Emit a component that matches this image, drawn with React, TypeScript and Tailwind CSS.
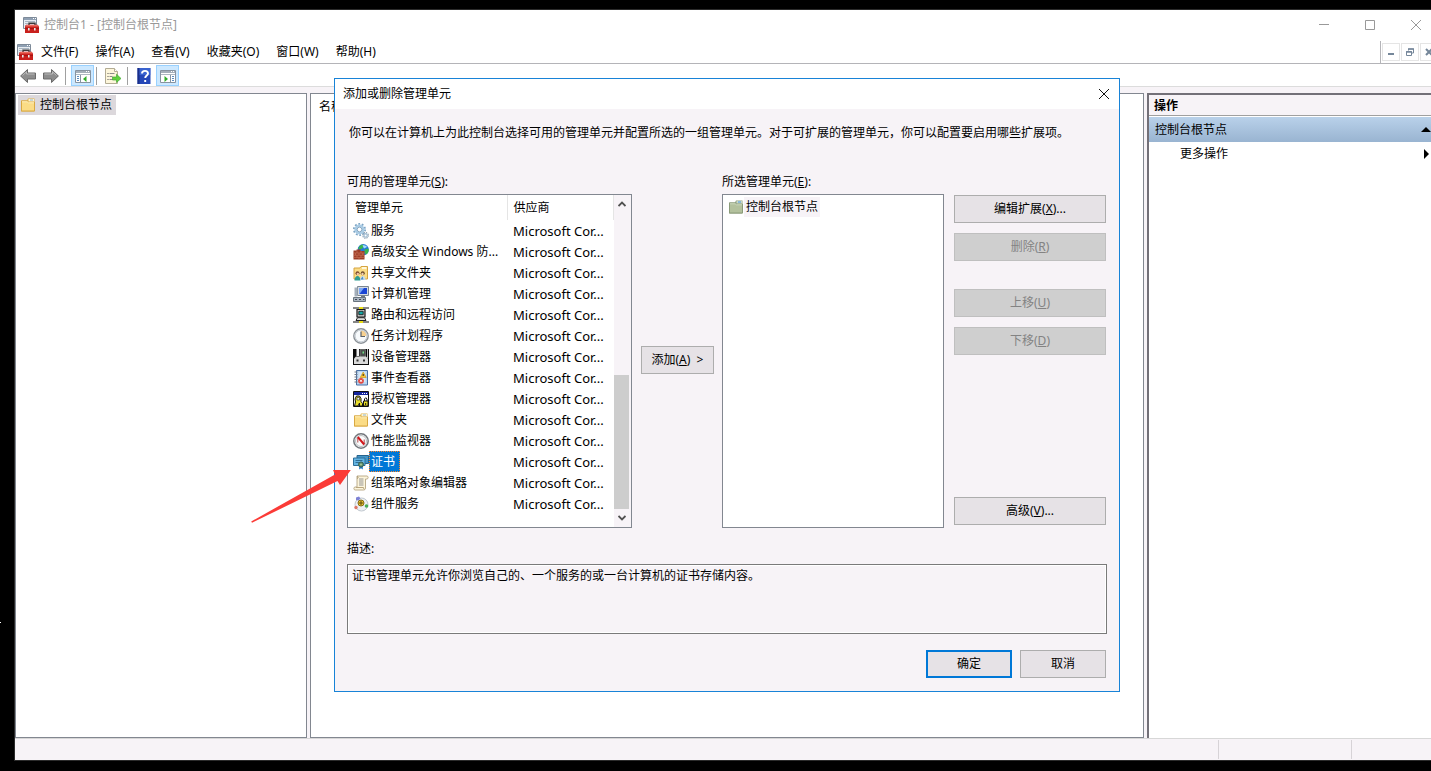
import React from "react";
import type { ReactNode } from "react";

function Svg({ children, className = "size-4" }: { children: ReactNode; className?: string }) {
  return (
    <svg viewBox="0 0 16 16" className={`${className} shrink-0`} aria-hidden="true">
      {children}
    </svg>
  );
}

const ConsoleIcon = () => (
  <Svg>
    <path d="M0.5 0.5h13v11h-13z" fill="#e8edf2" stroke="#7d8a99" />
    <path d="M1 1h12v2H1z" fill="#8fa0b3" />
    <path d="M2 4.5h10M2 6.5h3M2 8.5h3" stroke="#a9b6c3" />
    <path d="M10 1.5h1M12 1.5h1" stroke="#fff" />
    <path d="M6 8V6.2h6V8" fill="none" stroke="#3a3a3a" strokeWidth="1.4" />
    <path d="M3.2 7.8h11.6l1.2 1.8V16H2V9.6z" fill="#c9201c" />
    <path d="M3.4 8h11.2l.8 1.4H2.8z" fill="#ee6a5c" />
    <path d="M2 11.5h14" stroke="#a81512" />
    <path d="M5 11h1.6v2.5H5zM11 11h1.6v2.5H11z" fill="#e9e9e9" />
  </Svg>
);

const FolderIcon = ({ green = false }: { green?: boolean }) => (
  <Svg>
    <path d="M1 3.5h6l1-2h6.5V14.5H1z" fill={green ? "#8fa07f" : "#e2b44e"} />
    <path d="M8.5 2h5.500v3H8.500z" fill={green ? "#c9d8c4" : "#fff4cf"} />
    <path d="M10 2.500h3v1h-3z" fill={green ? "#4a9be8" : "#8fb8d8"} />
    <path d="M1.500 4h5.800l1.200 1h6v9h-13z" fill={green ? "#b3c19d" : "#fbdc86"} stroke={green ? "#8b9b79" : "#d9a942"} />
    <path d="M2 4.800h5.200l1.200 1h5.600" fill="none" stroke={green ? "#ced9bd" : "#fff0bd"} />
  </Svg>
);

const ServicesIcon = () => (
  <Svg>
    <circle cx="6.500" cy="6.500" r="5.600" fill="none" stroke="#7ba3c4" strokeWidth="1.800" strokeDasharray="1.800 1.700" />
    <circle cx="6.500" cy="6.500" r="3.700" fill="#fff" stroke="#a9cbe4" strokeWidth="2.600" />
    <circle cx="6.500" cy="6.500" r="2.300" fill="#fff" stroke="#7396b3" strokeWidth=".8" />
    <circle cx="12.600" cy="12.400" r="2.800" fill="none" stroke="#8497a8" strokeWidth="1.200" strokeDasharray="1.200 1" />
    <circle cx="12.600" cy="12.400" r="1.700" fill="#fff" stroke="#a5bfd4" strokeWidth="1.400" />
  </Svg>
);

const FirewallIcon = () => (
  <Svg>
    <circle cx="10.200" cy="5.700" r="5.600" fill="#2479d8" />
    <path d="M5.500 4c1-2.300 2.500-3.400 4.500-3.500l.5 2.500-2 2H5.500zM11.500 5.500l4-1c.6 2.800-.4 4.800-2.500 6l-1.500-2z" fill="#3bb54c" />
    <path d="M9.500 1.500c2-.8 3.500 0 4.500 1.500l-3 1.500z" fill="#a6e0fb" />
    <path d="M.5 6.500h3V5.500h4v1.500h4v8.500H.5z" fill="#9c3c27" />
    <path d="M.5 9h11M.5 11.200h11M.5 13.400h11M4 6.500V9M8 7v2M2.500 9v2.200M6 9v2.200M9.800 9v2.200M4 11.200v2.200M8 11.200v2.200M6 13.400v2" stroke="#cf7a60" strokeWidth=".6" />
  </Svg>
);

const SharedFolderIcon = () => (
  <Svg>
    <path d="M1 3h6l1-1.500h6.500V14H1z" fill="#fbdc86" stroke="#d6a440" />
    <path d="M9 2h4.500v2H9z" fill="#fff7db" />
    <circle cx="4.500" cy="8.200" r="2" fill="#7b4a2d" />
    <circle cx="4.800" cy="8.900" r="1.200" fill="#f2c9a4" />
    <path d="M1.500 15.500c0-6 6-6 6 0z" fill="#2f9c92" />
    <circle cx="9.700" cy="8.200" r="2" fill="#6d4a2a" />
    <circle cx="9.500" cy="8.900" r="1.200" fill="#f6d4b1" />
    <path d="M7 15c0-5.500 5.500-5.500 5.500 0z" fill="#c7dcec" />
    <path d="M7.500 14.500l2-3 1 3z" fill="#4c8cc4" />
  </Svg>
);

const ComputerIcon = () => (
  <Svg>
    <path d="M4.500.5h11v9h-11z" fill="#d5dbe1" stroke="#7b8691" />
    <path d="M6 2h8v6H6z" fill="#1b45d3" />
    <path d="M6 2h5L6.500 8H6z" fill="#7da8f4" />
    <path d="M1.500 1.500h3v9h-3z" fill="#a4afba" />
    <path d="M8 10h4v1.500H8z" fill="#6f7882" />
    <path d="M.5 11.500h12v4H.5z" fill="#a9b5c0" stroke="#6a757f" />
    <path d="M2 13.500h2M6 13.500h2M10 13.500h1.500" stroke="#445" />
  </Svg>
);

const RoutingIcon = () => (
  <Svg>
    <path d="M0 1h16M0 15h16" stroke="#111" strokeWidth="1.200" />
    <path d="M6 0h4v2H6zM6 14h4v2H6z" fill="#e8dc15" />
    <path d="M4 2.500h8v7.500H4z" fill="#c8c8c8" stroke="#151515" strokeWidth="1.200" />
    <path d="M5.800 4.300h4.400v3.400H5.800z" fill="#11a5a4" stroke="#111" strokeWidth=".8" />
    <path d="M3 13.500l1.500-2.800h7l1.500 2.800z" fill="#ddd" stroke="#222" />
  </Svg>
);

const ClockIcon = () => (
  <Svg>
    <circle cx="8" cy="8" r="7.200" fill="#f7fafc" stroke="#8b9197" strokeWidth="1.400" />
    <path d="M8 8V2.200A5.800 5.800 0 0 1 13.800 8z" fill="#f7d191" />
    <circle cx="8" cy="8" r="5.900" fill="none" stroke="#c4cbd2" />
    <path d="M8 3.500V8.500h4" fill="none" stroke="#59616a" strokeWidth="1.200" />
  </Svg>
);

const DeviceIcon = () => (
  <Svg>
    <path d="M0 0h16v16H0z" fill="#0a0a0a" />
    <path d="M3.500 0h2.500v7h-2.500z" fill="#f2f2f2" />
    <path d="M7 .5h5.500V9H7z" fill="#4c504e" stroke="#8c8c8c" strokeWidth=".6" />
    <path d="M9.500 2.500H11v2H9.500z" fill="#71e085" />
    <path d="M14 0h.8v9H14z" fill="#ececec" />
    <path d="M1 9.500L3 7.500h10l2 2v5.500H1z" fill="#dadada" />
    <path d="M3.500 10.500h2v2h-2zM10 10.500h2v2h-2z" fill="#333" />
  </Svg>
);

const EventIcon = () => (
  <Svg>
    <path d="M3.500.5h11v14.500h-11z" fill="#bad6f2" stroke="#496fa4" />
    <path d="M5.500 3h7M5.500 5h7M5.500 7h7M5.500 9h7M5.500 11h7" stroke="#fff" strokeWidth=".8" />
    <path d="M1.500 2h3M1.500 4.500h3M1.500 7h3M1.500 9.500h3M1.500 12h3" stroke="#717984" />
    <path d="M10.200 2l3 5.500h-6z" fill="#ffc42c" stroke="#c18d12" strokeWidth=".6" />
    <path d="M10.200 4v2" stroke="#222" />
    <circle cx="8" cy="10.800" r="2.900" fill="#e3473f" />
    <path d="M7 9.800l2 2M9 9.800l-2 2" stroke="#fff" />
  </Svg>
);

const AuthorizationIcon = () => (
  <Svg>
    <path d="M.5.5h15v15H.5z" fill="#fff" stroke="#111" />
    <path d="M1 1h14v3H1z" fill="#14259e" />
    <path d="M9 2.500h1M11 2.500h1M13 2.500h1" stroke="#fff" />
    <path d="M2 8l1.500-3h3L8 7.500v3l1.500 2V15H6.500v-3L5 15H1.500l1-4z" fill="#e8dd2c" stroke="#111" />
    <path d="M4 6.500h2.500v2.500H4z" fill="#f5f5f5" stroke="#222" strokeWidth=".6" />
    <path d="M11.500 10V8l1.300-1.300L14 8v2" fill="none" stroke="#111" />
    <path d="M10.500 10h4.500v5h-4.500z" fill="#e9dd24" stroke="#111" />
    <path d="M12.700 12v2" stroke="#111" />
  </Svg>
);

const PerformanceIcon = () => (
  <Svg>
    <circle cx="8" cy="8" r="7.200" fill="#fff" stroke="#72777c" strokeWidth="1.500" />
    <circle cx="8" cy="8" r="5.500" fill="#fbfbfb" stroke="#bbbfc2" />
    <path d="M4.800 9.500V4.800M11.200 6.500v4.700" fill="none" stroke="#b85a5c" strokeWidth="1.100" />
    <path d="M4.800 4l6.400 7.500" stroke="#d0161b" strokeWidth="2" />
  </Svg>
);

const CertificateIcon = () => (
  <Svg>
    <path d="M4 1.500h11.500v8H4z" fill="#4596c7" stroke="#28648d" />
    <path d="M.5 4h11.500v7.500H.5z" fill="#65b5e2" stroke="#2d6f9b" />
    <path d="M2.500 6.500h7M2.500 8.500h4" stroke="#2f6d96" />
    <path d="M6.200 11v4.500l1.800-1.300 1.800 1.300V11z" fill="#1d78c5" />
    <circle cx="8" cy="10.500" r="2.500" fill="#5b9270" stroke="#395f55" />
    <circle cx="8" cy="10.500" r=".9" fill="#b5c694" />
  </Svg>
);

const PolicyIcon = () => (
  <Svg>
    <path d="M4 1h10c1.500 0 1.500 3 0 3h-1.500v9c0 1.500-1 2-2 2H2c-1.500 0-1.500-3 0-3h2z" fill="#fcf5dc" stroke="#b5a582" strokeWidth=".9" />
    <path d="M3 12.500h7.500c0 1.500.5 2 1.200 1.700" fill="none" stroke="#b9a67f" />
    <path d="M6 4h4.500M6 6h4.500M6 8h4.500M6 10h4.500" stroke="#8d8d8d" strokeWidth=".9" />
    <path d="M4 1.500c1.500 0 1.300 2 0 2" fill="none" stroke="#a69470" />
  </Svg>
);

const ComponentIcon = () => (
  <Svg>
    <circle cx="8.500" cy="8.500" r="6.500" fill="#edf0f3" stroke="#c1c8cf" />
    <path d="M3 1.500l3-1 1.500 2-2 2-2.500-.5z" fill="#7e82d5" />
    <circle cx="8" cy="7" r="3" fill="#f3ca2e" stroke="#866c1a" />
    <path d="M8 4.800v4.400M5.800 7h4.400" stroke="#5b4a13" />
    <circle cx="3" cy="11.500" r="1.700" fill="#dd7768" />
    <circle cx="13.500" cy="10" r="1.800" fill="#48ac55" />
  </Svg>
);

const ToolArrow = ({ back = false }: { back?: boolean }) => (
  <Svg>
    <path
      d={back ? "M.6 8L7.500 1.500V5h8v6h-8v3.500z" : "M15.400 8L8.500 1.500V5h-8v6h8v3.500z"}
      fill="#8d8d8d"
      stroke="#6a6a6a"
    />
    <path d={back ? "M2.500 7.500L6.500 3.800V6h8" : "M13.500 7.500L9.500 3.800V6h-8"} fill="none" stroke="#bcbcbc" />
  </Svg>
);

const PaneIcon = ({ right = false }: { right?: boolean }) => (
  <Svg>
    <path d="M.5 2.500h15v12H.5z" fill="#fff" stroke="#8793a0" />
    <path d="M1 3h14v2H1z" fill="#a5afba" />
    <path d="M11 3.500h1M13 3.500h1" stroke="#fff" />
    <path d="M1 6.500h14" stroke="#aeb8c2" />
    {right ? (
      <>
        <path d="M10.500 7v7" stroke="#8793a0" />
        <path d="M12 8.500h2M12 10.500h2M12 12.500h2" stroke="#5c8cc0" />
        <path d="M4.500 8L8 11l-3.500 3z" fill="#31ac2b" />
      </>
    ) : (
      <>
        <path d="M5.500 7v7" stroke="#8793a0" />
        <path d="M2 8.500h2M2 10.500h2M2 12.500h2" stroke="#5c8cc0" />
        <path d="M11.500 8L8 11l3.500 3z" fill="#31ac2b" />
      </>
    )}
  </Svg>
);

const ExportIcon = () => (
  <Svg>
    <path d="M.5.500h9l3 3v12H.5z" fill="#fdf6db" stroke="#b3ac94" />
    <path d="M9.500.5v3h3" fill="#fff" stroke="#b3ac94" />
    <path d="M4.500 5.500h5M4.500 8.500h3M4.500 11.500h4" stroke="#8c8c8c" />
    <path d="M2.500 5.500h1M2.500 8.500h1M2.500 11.500h1" stroke="#555" />
    <path d="M7.500 9h4V6.200L16 10.500 11.500 14.500V12h-4z" fill="#5fd23c" stroke="#45a836" strokeWidth=".7" />
  </Svg>
);

const HelpIcon = () => (
  <Svg>
    <path d="M1.500 0h13v16h-13z" fill="#2547b8" />
    <path d="M1.500 0h2v16h-2z" fill="#1a2f88" />
    <path d="M3.500 0h11v7h-11z" fill="#4a76de" opacity=".6" />
    <path d="M6 5.500c0-3.500 6-3.500 6 0 0 2-2.800 2-2.800 4.500M9.200 12v2" fill="none" stroke="#fff" strokeWidth="1.900" />
  </Svg>
);

const snapIns: { name: string; icon: ReactNode; selected?: boolean }[] = [
  { name: "服务", icon: <ServicesIcon /> },
  { name: "高级安全 Windows 防...", icon: <FirewallIcon /> },
  { name: "共享文件夹", icon: <SharedFolderIcon /> },
  { name: "计算机管理", icon: <ComputerIcon /> },
  { name: "路由和远程访问", icon: <RoutingIcon /> },
  { name: "任务计划程序", icon: <ClockIcon /> },
  { name: "设备管理器", icon: <DeviceIcon /> },
  { name: "事件查看器", icon: <EventIcon /> },
  { name: "授权管理器", icon: <AuthorizationIcon /> },
  { name: "文件夹", icon: <FolderIcon /> },
  { name: "性能监视器", icon: <PerformanceIcon /> },
  { name: "证书", icon: <CertificateIcon />, selected: true },
  { name: "组策略对象编辑器", icon: <PolicyIcon /> },
  { name: "组件服务", icon: <ComponentIcon /> },
];

function PushButton({
  children,
  disabled = false,
  primary = false,
  className = "w-full",
}: {
  children: ReactNode;
  disabled?: boolean;
  primary?: boolean;
  className?: string;
}) {
  const look = disabled
    ? "border border-[#bfbfbf] bg-[#cfcfcf] text-[#838383]"
    : primary
      ? "border-2 border-[#0078d7] bg-[#e6e2e6]"
      : "border border-[#adadad] bg-[#e6e2e6]";
  return (
    <button type="button" disabled={disabled} className={`h-7 shrink-0 ${look} ${className}`}>
      {children}
    </button>
  );
}

function AddRemoveDialog() {
  return (
    <section
      role="dialog"
      aria-labelledby="dialog-title"
      className="absolute top-[68px] left-[319px] flex w-[786px] flex-col border border-[#1883d7] bg-[#f7f3f7]"
    >
      <header className="flex h-[30px] items-center justify-between bg-white pl-2">
        <h2 id="dialog-title">添加或删除管理单元</h2>
        <button type="button" aria-label="关闭" className="flex h-full w-[30px] items-center justify-center">
          <svg viewBox="0 0 10 10" className="size-[10px]" aria-hidden="true">
            <path d="M0 0l10 10M10 0L0 10" stroke="#111" />
          </svg>
        </button>
      </header>

      <div className="flex flex-col px-3 pt-[15px] pb-[13px]">
        <p className="pl-0.5">
          你可以在计算机上为此控制台选择可用的管理单元并配置所选的一组管理单元。对于可扩展的管理单元，你可以配置要启用哪些扩展项。
        </p>

        <div className="mt-[31px] flex pr-px">
          <div className="w-[285px]">
            <h3 id="available-label">
              可用的管理单元(<u>S</u>):
            </h3>
            <div className="mt-[3px] flex h-[334px] border border-[#828790] bg-white">
              <div className="flex-1">
                <table aria-labelledby="available-label" className="w-full table-fixed border-collapse text-left">
                  <thead>
                    <tr className="h-[25px]">
                      <th scope="col" className="w-[159px] border-r border-[#e5e5e5] p-0 pl-[7px] font-normal">
                        管理单元
                      </th>
                      <th scope="col" className="border-r border-[#e5e5e5] p-0 pl-[6px] font-normal">
                        供应商
                      </th>
                    </tr>
                  </thead>
                  <tbody>
                    {snapIns.map((item) => (
                      <tr key={item.name} className="h-[21px]" aria-selected={item.selected}>
                        <td className="p-0 pl-[5px]">
                          <div className="flex items-center whitespace-nowrap">
                            {item.icon}
                            <span
                              className={
                                item.selected
                                  ? "border border-dotted border-[#ff8728] bg-[#0078d7] pr-1 pl-px leading-[19px] text-white"
                                  : "px-0.5"
                              }
                            >
                              {item.name}
                            </span>
                          </div>
                        </td>
                        <td className="p-0 pl-[6px] text-[13px] whitespace-nowrap">Microsoft Cor...</td>
                      </tr>
                    ))}
                  </tbody>
                </table>
              </div>
              <div className="flex w-[17px] flex-col bg-[#f7f3f7] pr-0.5">
                <button type="button" aria-label="向上滚动" className="flex h-[18px] items-center justify-center">
                  <svg viewBox="0 0 8 6" className="h-[6px] w-2" aria-hidden="true">
                    <path d="M.5 5L4 1.500 7.500 5" fill="none" stroke="#505050" strokeWidth="1.800" />
                  </svg>
                </button>
                <div className="flex-1" />
                <div className="h-[134px] bg-[#cdcdcd]" />
                <button type="button" aria-label="向下滚动" className="flex h-[18px] items-center justify-center">
                  <svg viewBox="0 0 8 6" className="h-[6px] w-2" aria-hidden="true">
                    <path d="M.5 1L4 4.500 7.500 1" fill="none" stroke="#505050" strokeWidth="1.800" />
                  </svg>
                </button>
              </div>
            </div>
          </div>

          <div className="mx-2 flex flex-1 flex-col pt-[173px] pl-px">
            <PushButton>
              添加(<u>A</u>) &nbsp;&gt;
            </PushButton>
          </div>

          <div className="w-[222px]">
            <h3>
              所选管理单元(<u>E</u>):
            </h3>
            <ul className="mt-[3px] h-[334px] border border-[#828790] bg-white pt-0.5 pl-[5px]">
              <li className="flex h-5 items-center">
                <FolderIcon green />
                <span className="bg-[#f7f3f7] px-0.5 leading-5">控制台根节点</span>
              </li>
            </ul>
          </div>

          <div className="ml-[10px] flex w-[152px] flex-col pt-[22px] pb-[3px]">
            <PushButton>
              编辑扩展(<u>X</u>)...
            </PushButton>
            <div className="mt-[10px]">
              <PushButton disabled>
                删除(<u>R</u>)
              </PushButton>
            </div>
            <div className="mt-7 flex flex-col gap-[10px]">
              <PushButton disabled>
                上移(<u>U</u>)
              </PushButton>
              <PushButton disabled>
                下移(<u>D</u>)
              </PushButton>
            </div>
            <div className="mt-auto">
              <PushButton>
                高级(<u>V</u>)...
              </PushButton>
            </div>
          </div>
        </div>

        <h3 className="mt-3">描述:</h3>
        <div className="mt-[6px] h-[70px] border border-[#7a7a7a] bg-[#f7f3f7] px-1 pt-0.5 inset-ring inset-ring-white">
          证书管理单元允许你浏览自己的、一个服务的或一台计算机的证书存储内容。
        </div>

        <div className="mt-4 flex justify-end gap-2 pr-px">
          <PushButton primary className="w-[86px]">
            确定
          </PushButton>
          <PushButton className="w-[86px]">取消</PushButton>
        </div>
      </div>
    </section>
  );
}

const menus = ["文件(F)", "操作(A)", "查看(V)", "收藏夹(O)", "窗口(W)", "帮助(H)"];

export default function App() {
  return (
    <div className="relative flex h-screen min-h-[720px] overflow-hidden bg-black pt-[9px] pb-[10px] pl-[14px] font-['Noto_Sans','Noto_Sans_CJK_SC',sans-serif] text-[12px] leading-[18px] text-black">
      <span className="absolute top-[622px] left-0 h-px w-px bg-white" aria-hidden="true" />
      <div className="relative flex min-w-0 flex-1 flex-col border-y border-l border-[#2b2b2b] bg-[#f7f3f7]">
        <header className="flex h-[29px] shrink-0 items-center overflow-hidden bg-white pl-2">
          <ConsoleIcon />
          <h1 className="ml-[5px] flex-1 text-[#999]">控制台1 - [控制台根节点]</h1>
          <div className="flex h-full text-[#999]">
            <button type="button" aria-label="最小化" className="flex w-[46px] items-center justify-center">
              <svg viewBox="0 0 10 10" className="size-[10px]" aria-hidden="true">
                <path d="M0 4.500h10" stroke="currentColor" />
              </svg>
            </button>
            <button type="button" aria-label="最大化" className="flex w-[46px] items-center justify-center">
              <svg viewBox="0 0 10 10" className="size-[10px]" aria-hidden="true">
                <path d="M.5.500h9v9h-9z" fill="none" stroke="currentColor" />
              </svg>
            </button>
            <button type="button" aria-label="关闭" className="flex w-[38px] items-center justify-end pr-[10px]">
              <svg viewBox="0 0 10 10" className="size-[10px]" aria-hidden="true">
                <path d="M0 0l10 10M10 0L0 10" stroke="currentColor" />
              </svg>
            </button>
          </div>
        </header>

        <nav className="flex h-[25px] shrink-0 items-center border-b border-[#b4b4b8] bg-white pt-0.5 pl-0.5">
          <ConsoleIcon />
          <div className="flex flex-1 gap-[17px] pl-2">
            {menus.map((m) => (
              <button type="button" key={m}>
                {m}
              </button>
            ))}
          </div>
          <div className="flex h-full w-[51px] items-center gap-px overflow-hidden border-l border-[#b4b4b8] pl-px">
            <button type="button" aria-label="最小化子窗口" className="flex size-[18px] shrink-0 items-center justify-center border border-[#e5e5e5]">
              <svg viewBox="0 0 8 8" className="size-2" aria-hidden="true">
                <path d="M1 6h6" stroke="#75879a" strokeWidth="2" />
              </svg>
            </button>
            <button type="button" aria-label="还原子窗口" className="flex size-[18px] shrink-0 items-center justify-center border border-[#e5e5e5]">
              <svg viewBox="0 0 8 8" className="size-2" aria-hidden="true">
                <path d="M2.500 2.500V1h5v4H6M.5 3.500h5v4h-5z" fill="none" stroke="#75879a" />
                <path d="M2 1h6M0 4h6" stroke="#75879a" strokeWidth="1.500" />
              </svg>
            </button>
            <button type="button" aria-label="关闭子窗口" className="flex size-[18px] shrink-0 items-center justify-center border border-[#e5e5e5]">
              <svg viewBox="0 0 8 8" className="size-2" aria-hidden="true">
                <path d="M1 1l6 6M7 1L1 7" stroke="#75879a" strokeWidth="2" />
              </svg>
            </button>
          </div>
        </nav>

        <div className="flex h-[23px] shrink-0 items-center border-b border-[#dcdcdc] bg-white pt-px pl-[5px]">
          <button type="button" aria-label="后退" className="mr-[7px]">
            <ToolArrow back />
          </button>
          <button type="button" aria-label="前进">
            <ToolArrow />
          </button>
          <span className="ml-[6px] h-[18px] w-px bg-[#a0a0a0]" />
          <button type="button" aria-label="显示控制台树" className="ml-[5px] flex h-[21px] w-[23px] items-center justify-center border border-[#99d1ff] bg-[#cce8ff]">
            <PaneIcon />
          </button>
          <span className="ml-0.5 h-[18px] w-px bg-[#a0a0a0]" />
          <button type="button" aria-label="导出列表" className="ml-2">
            <ExportIcon />
          </button>
          <span className="ml-[6px] h-[18px] w-px bg-[#a0a0a0]" />
          <button type="button" aria-label="帮助" className="ml-2">
            <HelpIcon />
          </button>
          <button type="button" aria-label="显示操作窗格" className="ml-1 flex h-[21px] w-[23px] items-center justify-center border border-[#99d1ff] bg-[#cce8ff]">
            <PaneIcon right />
          </button>
        </div>

        <main className="mt-[6px] flex min-h-0 flex-1 gap-[3px]">
          <aside className="w-[292px] shrink-0 border border-[#828790] bg-white px-0.5 pt-px">
            <button type="button" className="inline-flex h-5 items-center gap-1 bg-[#dcd8dc] pr-1 pl-0.5">
              <FolderIcon />
              <span>控制台根节点</span>
            </button>
          </aside>

          <section className="flex-1 border border-[#828790] bg-white px-2 pt-1">名称</section>

          <aside className="w-[284px] shrink-0 border-t-2 border-l-2 border-[#737078] bg-white">
            <h2 className="flex h-[21px] items-center border-b border-[#a0a0a0] bg-[#f7f3f7] pt-px pl-[5px] font-bold">操作</h2>
            <button type="button" className="mt-px flex h-[25px] w-full items-center justify-between bg-linear-to-b from-[#b9d1ea] to-[#99b4d1] pl-[6px]">
              <span>控制台根节点</span>
              <svg viewBox="0 0 10 5" className="h-[5px] w-[10px]" aria-hidden="true">
                <path d="M0 5l5-5 5 5z" />
              </svg>
            </button>
            <button type="button" className="flex h-6 w-full items-center justify-between pr-0.5 pl-[31px]">
              <span>更多操作</span>
              <svg viewBox="0 0 5 10" className="h-[10px] w-[5px]" aria-hidden="true">
                <path d="M0 0l5 5-5 5z" />
              </svg>
            </button>
          </aside>
        </main>

        <footer className="flex h-[22px] shrink-0 border-t border-[#d7d7d7] pt-px pb-px">
          <div className="flex-1 border-r border-[#d7d3d7]" />
          <div className="w-[133px] border-r border-[#d7d3d7]" />
          <div className="w-[79px]" />
        </footer>

        <AddRemoveDialog />

        <svg viewBox="0 0 100 54" className="pointer-events-none absolute top-[459px] left-[236px] h-[54px] w-[100px]" aria-hidden="true">
          <path d="M.2 52.500L84 5.500 82 1H99.800L89 16 86.500 12 1 53.800z" fill="#fb3b37" />
        </svg>
      </div>
    </div>
  );
}
